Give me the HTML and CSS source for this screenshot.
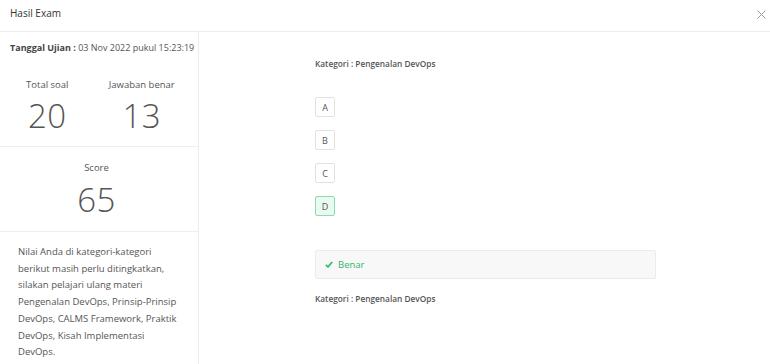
FILE: index.html
```html
<!DOCTYPE html>
<html>
<head>
<meta charset="utf-8">
<link rel="stylesheet" href="styles.css">
</head>
<body>
<div class="modal">
  <div class="modal-header">
    <div class="title">Hasil Exam</div>
    <svg class="close" width="9" height="9" viewBox="0 0 9 9"><path d="M0.5 0.5L8.5 8.5M8.5 0.5L0.5 8.5" stroke="#9a9a9a" stroke-width="1" fill="none"/></svg>
  </div>
  <div class="modal-body">
    <aside class="sidebar">
      <div class="date"><b>Tanggal Ujian :</b> 03 Nov 2022 pukul 15:23:19</div>
      <div class="stats">
        <div class="stat"><div class="label">Total soal</div><div class="num">20</div></div>
        <div class="stat"><div class="label">Jawaban benar</div><div class="num">13</div></div>
      </div>
      <div class="score">
        <div class="label">Score</div>
        <div class="num">65</div>
      </div>
      <p class="note">Nilai Anda di kategori-kategori berikut masih perlu ditingkatkan, silakan pelajari ulang materi Pengenalan DevOps, Prinsip-Prinsip DevOps, CALMS Framework, Praktik DevOps, Kisah Implementasi DevOps.</p>
    </aside>
    <main class="content">
      <div class="category">Kategori : Pengenalan DevOps</div>
      <div class="options">
        <div class="option"><span class="letter">A</span></div>
        <div class="option"><span class="letter">B</span></div>
        <div class="option"><span class="letter">C</span></div>
        <div class="option"><span class="letter correct">D</span></div>
      </div>
      <div class="result">
        <svg class="check" width="8" height="7" viewBox="0 0 8 7"><path d="M0.8 3.8L3 5.8L7.2 1" stroke="#2fbf71" stroke-width="1.8" fill="none"/></svg>
        <span>Benar</span>
      </div>
      <div class="category second">Kategori : Pengenalan DevOps</div>
    </main>
  </div>
</div>
</body>
</html>
```
FILE: styles.css
```css
* { box-sizing: border-box; }
html, body { margin: 0; padding: 0; background: #fff; }
body {
  font-family: "Open Sans", "Liberation Sans", sans-serif;
  color: #555;
  width: 770px;
  height: 364px;
  overflow: hidden;
}
.modal { display: flex; flex-direction: column; height: 364px; }
.modal-header {
  height: 32px;
  border-bottom: 1px solid #ececec;
  display: flex;
  align-items: center;
  justify-content: space-between;
  padding: 0 4px 6px 10px;
}
.title { font-size: 10px; color: #333; }
.close { margin-top: 3px; }
.modal-body { display: flex; flex: 1; }
.sidebar {
  width: 199px;
  border-right: 1px solid #ececec;
  display: flex;
  flex-direction: column;
}
.date {
  font-size: 9px;
  padding: 9px 0 0 10px;
  height: 34px;
  color: #555;
}
.date b { font-weight: 700; color: #444; }
.stats {
  display: flex;
  border-bottom: 1px solid #efefef;
  height: 81px;
  padding-right: 9px;
}
.stat { flex: 1; text-align: center; }
.label { font-size: 9.5px; color: #555; line-height: 14px; }
.stat .label { margin-top: 12px; }
.num { font-size: 33px; font-weight: 300; color: #555; line-height: 38px; letter-spacing: 0.5px; margin-top: 5px; }
.score { text-align: center; border-bottom: 1px solid #efefef; height: 85px; padding-right: 5px; }
.score .label { margin-top: 14px; }
.score .num { margin-top: 6px; }
.note {
  margin: 0;
  padding: 12px 16px 0 18px;
  font-size: 9.5px;
  line-height: 16.7px;
  color: #555;
}
.content { flex: 1; padding-left: 116px; padding-top: 26px; }
.category { font-size: 8.3px; font-weight: 600; color: #555; line-height: 12px; }
.options { display: flex; flex-direction: column; gap: 13px; margin-top: 27px; }
.option { height: 20px; display: flex; }
.letter {
  width: 20px; height: 20px;
  border: 1px solid #e2e2e2;
  border-radius: 2px;
  font-size: 9px;
  display: flex; align-items: center; justify-content: center;
  color: #555;
}
.letter.correct { background: #ebfaf1; border-color: #8ddcb0; }
.result {
  margin-top: 34px;
  width: 341px;
  height: 29px;
  background: #f8f8f8;
  border: 1px solid #ececec;
  border-radius: 2px;
  display: flex;
  align-items: center;
  padding-left: 9px;
  gap: 5px;
  font-size: 9.5px;
  color: #2fb56d;
}
.category.second { margin-top: 14px; }
```
